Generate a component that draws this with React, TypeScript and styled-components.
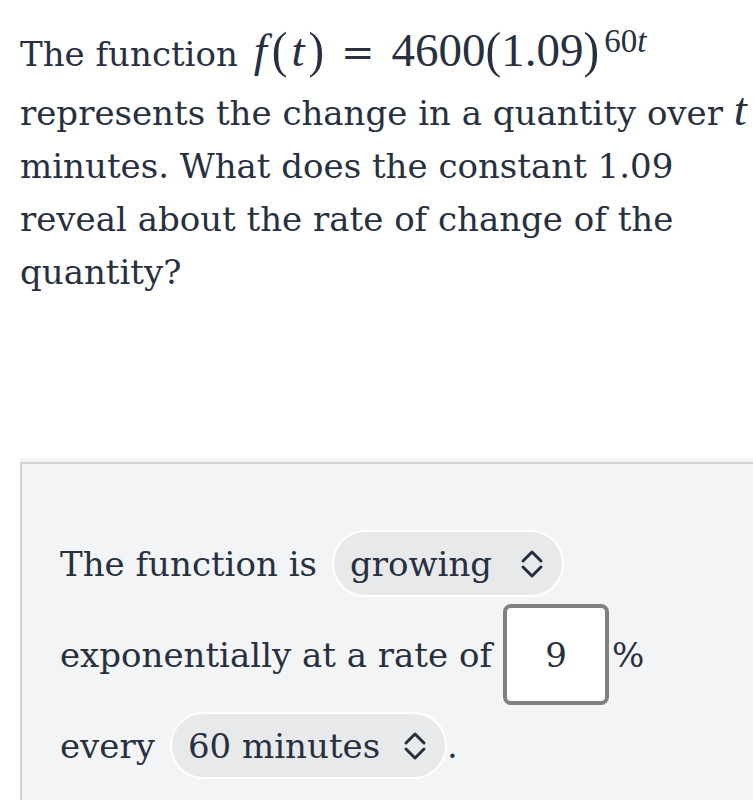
import React, { FC } from "react";
import styled, { createGlobalStyle } from "styled-components";

const GlobalStyle = createGlobalStyle`
  html, body {
    margin: 0;
    padding: 0;
    background: #ffffff;
    overflow: hidden;
  }
`;

const Page = styled.div`
  width: 753px;
  height: 800px;
  overflow: hidden;
  color: #283040;
  font-family: "DejaVu Serif", "Liberation Serif", serif;
`;

const Question = styled.p`
  margin: 0;
  padding: 24px 0 0 20px;
  font-size: 34px;
  line-height: 53px;
  white-space: nowrap;
`;

const FirstLine = styled.span`
  display: inline-block;
  margin-bottom: 2px;
`;

const Math = styled.span`
  font-family: "Liberation Serif", serif;
  font-size: 47px;
`;

interface VarProps {
  gap?: number;
}

const Var = styled.i<VarProps>`
  font-style: italic;
  margin: 0 ${({ gap }) => gap ?? 3}px;
`;

const Paren = styled.span`
  display: inline-block;
  transform: scaleY(1.08);
`;

const Rel = styled.span`
  font-family: "DejaVu Serif", serif;
  font-size: 40px;
  margin: 0 17px 0 17px;
`;

const Sup = styled.sup`
  font-size: 33px;
  line-height: 0;
  vertical-align: 14px;
  margin-left: 5px;
`;

const AnswerBox = styled.div`
  margin: 163px -20px 0 20px;
  background: #f3f4f5;
  border: 2px solid #d3d3d3;
  border-right: none;
  box-shadow: 0 -4px 0 #f4f4f4;
  padding: 66px 0 40px 38px;
  display: flex;
  flex-direction: column;
  gap: 24px;
`;

const Row = styled.div`
  display: flex;
  align-items: center;
  height: 67px;
  font-size: 34px;
  white-space: nowrap;
`;

const Word = styled.span`
  margin-right: 15px;
`;

interface PillProps {
  width: number;
}

const Pill = styled.div<PillProps>`
  display: flex;
  align-items: center;
  justify-content: space-between;
  box-sizing: border-box;
  width: ${({ width }) => width}px;
  height: 67px;
  padding: 0 16px 0 16px;
  border: 2px solid #ffffff;
  border-radius: 34px;
  background: #e8e9eb;
`;

const Blank = styled.div`
  display: flex;
  align-items: center;
  justify-content: center;
  box-sizing: border-box;
  width: 106px;
  height: 101px;
  margin: 0 3px 0 -4px;
  background: #ffffff;
  border: 4px solid #808080;
  border-radius: 8px;
`;

const UpDown: FC = () => (
  <svg width="28" height="32" viewBox="0 0 28 32" fill="none">
    <path
      d="M5 13l9-9 9 9M5 19l9 9 9-9"
      stroke="#283040"
      strokeWidth="3"
      strokeLinecap="round"
      strokeLinejoin="round"
    />
  </svg>
);

const App: FC = () => {
  return (
    <Page>
      <GlobalStyle />
      <Question>
        <FirstLine>
          The function{" "}
          <Math>
            <Var gap={5}>f</Var>
            <Paren>(</Paren>
            <Var gap={4}>t</Var>
            <Paren>)</Paren>
            <Rel>=</Rel>4600<Paren>(</Paren>1.09<Paren>)</Paren>
            <Sup>
              60<Var gap={0}>t</Var>
            </Sup>
          </Math>
        </FirstLine>
        <br />
        represents the change in a quantity over{" "}
        <Math>
          <Var gap={0}>t</Var>
        </Math>
        <br />
        minutes. What does the constant 1.09
        <br />
        reveal about the rate of change of the
        <br />
        quantity?
      </Question>
      <AnswerBox>
        <Row>
          <Word>The function is</Word>
          <Pill width={232}>
            <span>growing</span>
            <UpDown />
          </Pill>
        </Row>
        <Row>
          <Word>exponentially at a rate of</Word>
          <Blank>9</Blank>
          <span>%</span>
        </Row>
        <Row>
          <Word>every</Word>
          <Pill width={277}>
            <span>60 minutes</span>
            <UpDown />
          </Pill>
          <span>.</span>
        </Row>
      </AnswerBox>
    </Page>
  );
};

export default App;
